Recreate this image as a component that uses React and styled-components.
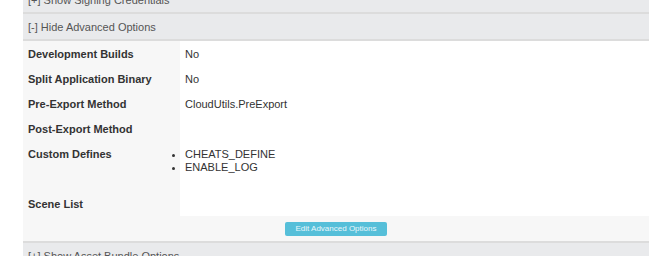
import React from "react";
import styled, { createGlobalStyle } from "styled-components";

const Global = createGlobalStyle`
  html, body { margin: 0; padding: 0; background: #fff; }
  body { font-family: "Liberation Sans", Arial, sans-serif; color: #333; overflow: hidden; }
`;

const Page = styled.div`
  width: 626px;
  margin-left: 23px;
  margin-top: -13px;
`;

const SectionHeader = styled.div`
  height: 25px;
  padding: 0 5px;
  display: flex;
  align-items: center;
  background: #e9eaec;
  border-bottom: 2px solid #dcdcdc;
  font-size: 11px;
  color: #555;
  box-sizing: content-box;
`;

const Table = styled.div`
  display: grid;
  grid-template-columns: 157px 1fr;
`;

const Label = styled.div`
  background: #f7f7f7;
  padding: 7px 5px 5px;
  font-size: 11px;
  line-height: 13px;
  font-weight: bold;
  color: #333;
  height: ${(p) => (p.$tall ? "38px" : "13px")};
  display: flex;
  align-items: ${(p) => (p.$center ? "center" : "flex-start")};
`;

const Value = styled.div`
  background: #fff;
  padding: 7px 5px 5px;
  font-size: 11px;
  line-height: 13px;
  color: #333;
  height: ${(p) => (p.$tall ? "38px" : "13px")};
`;

const List = styled.ul`
  margin: 0;
  padding: 0;
  list-style: none;
`;

const Item = styled.li`
  position: relative;
  &::before {
    content: "";
    position: absolute;
    left: -13px;
    top: 6px;
    width: 3px;
    height: 3px;
    border-radius: 50%;
    background: #333;
  }
`;

const Footer = styled.div`
  height: 27px;
  box-sizing: border-box;
  background: #f7f7f7;
  border-bottom: 2px solid #dcdcdc;
  display: flex;
  justify-content: center;
  align-items: flex-start;
  padding-top: 6px;
`;

const Button = styled.button`
  width: 102px;
  height: 14px;
  padding: 0;
  border: none;
  border-radius: 2px;
  background: #56bfd9;
  color: #eaf7fb;
  font-family: "Liberation Sans", Arial, sans-serif;
  font-size: 8px;
  line-height: 14px;
  cursor: pointer;
`;

const rows = [
  ["Development Builds", "No"],
  ["Split Application Binary", "No"],
  ["Pre-Export Method", "CloudUtils.PreExport"],
  ["Post-Export Method", ""],
];

export default function App() {
  return (
    <>
      <Global />
      <Page>
        <SectionHeader>[+] Show Signing Credentials</SectionHeader>
        <SectionHeader>[-] Hide Advanced Options</SectionHeader>
        <Table>
          {rows.map(([l, v]) => (
            <React.Fragment key={l}>
              <Label>{l}</Label>
              <Value>{v}</Value>
            </React.Fragment>
          ))}
          <Label $tall>Custom Defines</Label>
          <Value $tall>
            <List>
              <Item>CHEATS_DEFINE</Item>
              <Item>ENABLE_LOG</Item>
            </List>
          </Value>
          <Label $center>Scene List</Label>
          <Value />
        </Table>
        <Footer>
          <Button>Edit Advanced Options</Button>
        </Footer>
        <SectionHeader>[+] Show Asset Bundle Options</SectionHeader>
      </Page>
    </>
  );
}
